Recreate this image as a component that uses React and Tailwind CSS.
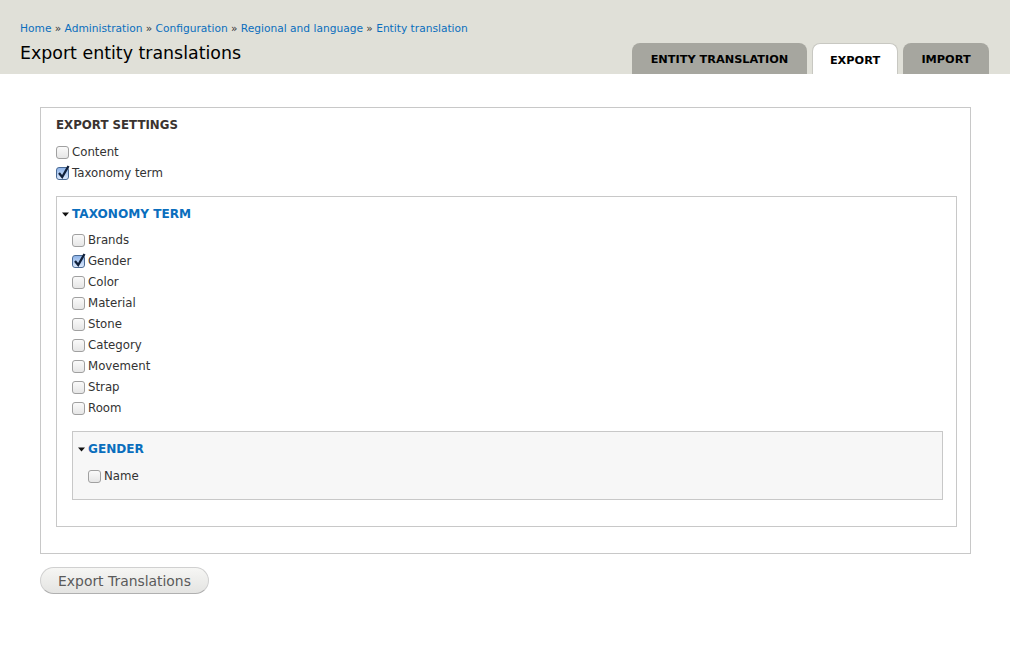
const font = { fontFamily: '"DejaVu Sans", sans-serif' };

function Check({ checked }) {
  return (
    <span className={`relative block w-[13px] h-[13px] shrink-0 rounded-[3px] border ${checked ? "border-[#4a6a94] bg-gradient-to-b from-[#8fb4e8] to-[#dbe8fb]" : "border-[#a0a0a0] bg-gradient-to-b from-[#fafafa] to-[#e6e6e6]"}`}>
      {checked && (
        <svg className="absolute left-[-1px] top-[-4px]" width="15" height="16" viewBox="0 0 15 16">
          <path d="M3 9 L6.2 13 L12.5 2" fill="none" stroke="#10203a" strokeWidth="2.3" />
        </svg>
      )}
    </span>
  );
}

function Row({ label, checked }) {
  return (
    <div className="flex items-center h-[21px] gap-[3px] text-[11.75px] text-[#333]">
      <Check checked={checked} />
      <span>{label}</span>
    </div>
  );
}

function Legend({ children }) {
  return (
    <div className="flex items-center h-[18px] text-[12.1px] font-bold text-[#0a6ebd] uppercase">
      <svg className="w-[11px] shrink-0" width="11" height="5" viewBox="0 0 11 5">
        <path d="M1 0.5 H8 L4.5 4.5 Z" fill="#111" />
      </svg>
      <span>{children}</span>
    </div>
  );
}

function Tab({ label, active, width }) {
  return (
    <div className={`flex items-center justify-center h-[31px] pt-[4px] rounded-t-[8px] text-[11.3px] font-bold uppercase text-black ${width} ${active ? "bg-white border-x border-t border-[#c8c8c2]" : "bg-[#a6a69f]"}`}>
      {label}
    </div>
  );
}

export default function App() {
  const items = ["Brands", "Gender", "Color", "Material", "Stone", "Category", "Movement", "Strap", "Room"];
  return (
    <div style={font} className="w-[1010px] h-[646px] bg-white overflow-hidden">
      <header className="h-[74px] bg-[#e0e0d8] flex justify-between items-end pl-[20px] pr-[21px]">
        <div className="self-start pt-[21px]">
          <div className="flex text-[10.65px] leading-[16px] text-[#0a6ebd] gap-[3.3px]">
            <span>Home</span><span className="text-[#333]">»</span>
            <span>Administration</span><span className="text-[#333]">»</span>
            <span>Configuration</span><span className="text-[#333]">»</span>
            <span>Regional and language</span><span className="text-[#333]">»</span>
            <span>Entity translation</span>
          </div>
          <h1 className="text-[17.4px] leading-[24px] mt-[4px] text-black font-normal">Export entity translations</h1>
        </div>
        <div className="flex gap-[5px]">
          <Tab label="Entity translation" width="w-[175px]" />
          <Tab label="Export" active width="w-[86px]" />
          <Tab label="Import" width="w-[86px]" />
        </div>
      </header>

      <main className="pt-[33px] pl-[40px] pr-[39px]">
        <section className="h-[447px] border border-[#c8c8c8] pt-[8px] pl-[15px] pr-[13px]">
          <div className="h-[18px] leading-[18px] text-[11.8px] font-bold uppercase text-[#3a3330]">Export settings</div>
          <div className="mt-[8px]">
            <Row label="Content" />
            <Row label="Taxonomy term" checked />
          </div>
          <section className="h-[331px] mt-[12px] border border-[#c8c8c8] pt-[8px] pl-[4px] pr-[13px]">
            <Legend>Taxonomy term</Legend>
            <div className="mt-[7px] ml-[11px]">
              {items.map((x) => <Row key={x} label={x} checked={x === "Gender"} />)}
            </div>
            <section className="h-[69px] ml-[11px] mt-[12px] border border-[#c8c8c8] bg-[#f7f7f7] pt-[8px] pl-[4px]">
              <Legend>Gender</Legend>
              <div className="mt-[8px] ml-[11px]">
                <Row label="Name" />
              </div>
            </section>
          </section>
        </section>
        <button className="mt-[13px] w-[169px] h-[27px] pt-[1px] rounded-[14px] border border-[#d0d0d0] border-b-[#b0b0b0] bg-gradient-to-b from-[#f6f6f4] to-[#e4e4e2] text-[13.9px] text-[#5a5a5a]">
          Export Translations
        </button>
      </main>
    </div>
  );
}
